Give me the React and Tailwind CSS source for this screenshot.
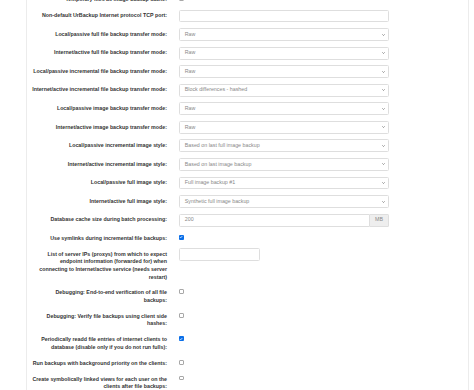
import React from 'react';

const rows = [
  { label: ['Temporary files as image backup cache:'], type: 'check', checked: false },
  { label: ['Non-default UrBackup Internet protocol TCP port:'], type: 'text' },
  { label: ['Local/passive full file backup transfer mode:'], type: 'select', value: 'Raw' },
  { label: ['Internet/active full file backup transfer mode:'], type: 'select', value: 'Raw' },
  { label: ['Local/passive incremental file backup transfer mode:'], type: 'select', value: 'Raw' },
  { label: ['Internet/active incremental file backup transfer mode:'], type: 'select', value: 'Block differences - hashed' },
  { label: ['Local/passive image backup transfer mode:'], type: 'select', value: 'Raw' },
  { label: ['Internet/active image backup transfer mode:'], type: 'select', value: 'Raw' },
  { label: ['Local/passive incremental image style:'], type: 'select', value: 'Based on last full image backup' },
  { label: ['Internet/active incremental image style:'], type: 'select', value: 'Based on last image backup' },
  { label: ['Local/passive full image style:'], type: 'select', value: 'Full image backup #1' },
  { label: ['Internet/active full image style:'], type: 'select', value: 'Synthetic full image backup' },
  { label: ['Database cache size during batch processing:'], type: 'addon', value: '200', addon: 'MB' },
  { label: ['Use symlinks during incremental file backups:'], type: 'check', checked: true },
  {
    label: [
      'List of server IPs (proxys) from which to expect',
      'endpoint information (forwarded for) when',
      'connecting to Internet/active service (needs server',
      'restart)',
    ],
    type: 'short',
  },
  { label: ['Debugging: End-to-end verification of all file', 'backups:'], type: 'check', checked: false },
  { label: ['Debugging: Verify file backups using client side', 'hashes:'], type: 'check', checked: false },
  {
    label: ['Periodically readd file entries of internet clients to', 'database (disable only if you do not run fulls):'],
    type: 'check',
    checked: true,
  },
  { label: ['Run backups with background priority on the clients:'], type: 'check', checked: false },
  { label: ['Create symbolically linked views for each user on the', 'clients after file backups:'], type: 'check', checked: false },
];

function Chevron() {
  return (
    <svg width="3" height="2" viewBox="0 0 3 2" className="shrink-0">
      <path d="M0.3 0.3 L1.5 1.5 L2.7 0.3" fill="none" stroke="#555" strokeWidth="0.6" />
    </svg>
  );
}

function Checkbox({ checked }) {
  if (checked) {
    return (
      <span className="mt-[2.7px] flex h-[4.7px] w-[4.7px] items-center justify-center rounded-[1px] bg-[#0b6fe8]">
        <svg width="4" height="4" viewBox="0 0 4 4">
          <path d="M0.8 2 L1.7 2.9 L3.3 1" fill="none" stroke="#fff" strokeWidth="0.7" />
        </svg>
      </span>
    );
  }
  return <span className="mt-[2.7px] block h-[4.7px] w-[4.7px] rounded-[1px] border border-[#a8a8a8] bg-white" />;
}

function Control({ row }) {
  const box = 'h-[12.9px] border border-[#dedede] bg-white flex items-center text-[#888] font-normal';
  if (row.type === 'check') return <Checkbox checked={row.checked} />;
  if (row.type === 'text') return <div className={`${box} w-[210px] rounded-[1.5px]`} />;
  if (row.type === 'short') return <div className={`${box} w-[81px] rounded-[1.5px]`} />;
  if (row.type === 'addon') {
    return (
      <div className="flex w-[210px]">
        <div className={`${box} flex-1 rounded-l-[1.5px] pl-[4.8px]`}>{row.value}</div>
        <div className="flex h-[12.9px] w-[19px] items-center justify-center rounded-r-[1.5px] border border-l-0 border-[#dedede] bg-[#eeeeee] font-normal text-[#888]">
          {row.addon}
        </div>
      </div>
    );
  }
  return (
    <div className={`${box} w-[210px] justify-between rounded-[1.5px] pl-[4.8px] pr-[3px]`}>
      <span>{row.value}</span>
      <Chevron />
    </div>
  );
}

function Row({ row }) {
  return (
    <div className="mb-[5.68px] flex">
      <label className="w-[140px] shrink-0 whitespace-nowrap pt-[2.65px] text-right font-bold text-[#333]">
        {row.label.map((line, i) => (
          <div key={i}>{line}</div>
        ))}
      </label>
      <div className="ml-[12px]">
        <Control row={row} />
      </div>
    </div>
  );
}

export default function App() {
  return (
    <div className="relative h-[390px] w-[474px] overflow-hidden bg-white font-['Liberation_Sans',Arial,sans-serif] text-[5.3px] leading-[7.58px]">
      <div className="ml-[26px] mt-[-6.4px] h-[420px] w-[443px] border-x border-[#ececec]">
        {rows.map((row, i) => (
          <Row key={i} row={row} />
        ))}
      </div>
    </div>
  );
}
